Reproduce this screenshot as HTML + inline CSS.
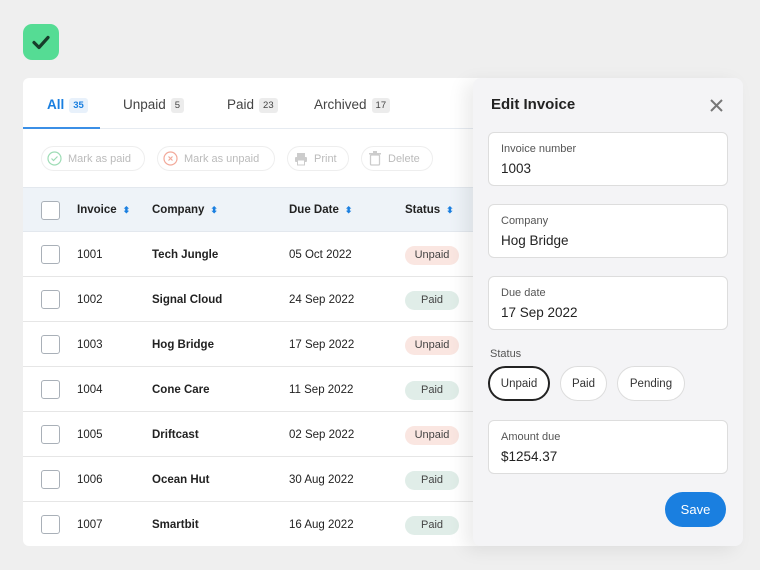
<!DOCTYPE html>
<html><head><style>
*{box-sizing:border-box;margin:0;padding:0}
body{width:760px;height:570px;background:#efefef;font-family:"Liberation Sans",sans-serif;position:relative;overflow:hidden;color:#222}
.abs{position:absolute}
.logo{left:23px;top:24px;width:36px;height:36px;border-radius:9px;background:#55dc94}
.card{left:23px;top:78px;width:470px;height:468px;background:#fff;border-radius:6px;overflow:hidden}
.tab{top:19px;font-size:13.5px;color:#444}
.cnt{display:inline-block;background:#ececec;color:#444;font-size:9.5px;padding:2px 4px;border-radius:3px;margin-left:5px;vertical-align:1px}
.btn{top:68px;height:25px;border:1px solid #eee;border-radius:13px;font-size:11px;color:#bbb;padding:6px 10px 0 26px}
.hdr{left:0;top:109px;width:470px;height:45px;background:#eef3f8;border-top:1px solid #e3e8ee;border-bottom:1px solid #e3e8ee}
.cb{width:19px;height:19px;border:1.5px solid #a9b0b8;border-radius:3px;background:#fff}
.th{font-size:11.5px;font-weight:bold;color:#222}
.ar{color:#1a7fe0;font-size:9px;margin-left:6px}
.row{left:0;width:470px;height:45px;border-bottom:1px solid #e6e6e6}
.td{font-size:11.5px;top:17px}
.badge{left:382px;top:14px;width:54px;height:19px;border-radius:10px;font-size:11px;text-align:center;line-height:19px;color:#444}
.u{background:#fae6e1}.p{background:#e0ede8}
.panel{left:473px;top:78px;width:270px;height:468px;background:#f4f4f6;border-radius:8px;box-shadow:-8px 4px 18px rgba(0,0,0,.08)}
.f{left:15px;width:240px;height:54px;background:#fff;border:1px solid #ddd;border-radius:6px}
.f .l{position:absolute;left:12px;top:10px;font-size:11px;color:#555}
.f .v{position:absolute;left:12px;top:28px;font-size:13.5px;color:#222}
.pill{top:288px;height:35px;border:1px solid #ddd;border-radius:18px;background:#fff;font-size:11.5px;text-align:center;line-height:35px;color:#333}
</style></head><body>
<div class="abs logo"><svg width="36" height="36" viewBox="0 0 36 36"><path d="M11 18.5l5 5 9-10" fill="none" stroke="#173d2a" stroke-width="3.2" stroke-linecap="round" stroke-linejoin="round"/></svg></div>
<div class="abs card">
 <div class="abs tab" style="left:24px;color:#1a7fe0;font-weight:bold">All<span class="cnt" style="background:#e8f1fb;color:#1a7fe0">35</span></div>
 <div class="abs tab" style="left:100px">Unpaid<span class="cnt">5</span></div>
 <div class="abs tab" style="left:204px">Paid<span class="cnt">23</span></div>
 <div class="abs tab" style="left:291px">Archived<span class="cnt">17</span></div>
 <div class="abs" style="left:0;top:50px;width:470px;height:1px;background:#e6ebf1"></div>
 <div class="abs" style="left:0;top:49px;width:77px;height:2px;background:#3b8fe6"></div>
 <div class="abs btn" style="left:18px;width:104px">Mark as paid<svg class="abs" style="left:5px;top:4px" width="15" height="15"><circle cx="7.5" cy="7.5" r="6.5" fill="none" stroke="#9ddcb5" stroke-width="1.2"/><path d="M4.5 7.5l2 2 4-4" fill="none" stroke="#9ddcb5" stroke-width="1.2"/></svg></div>
 <div class="abs btn" style="left:134px;width:118px">Mark as unpaid<svg class="abs" style="left:5px;top:4px" width="15" height="15"><circle cx="7.5" cy="7.5" r="6.5" fill="none" stroke="#f2a99a" stroke-width="1.2"/><path d="M5.5 5.5l4 4M9.5 5.5l-4 4" stroke="#f2a99a" stroke-width="1.2"/></svg></div>
 <div class="abs btn" style="left:264px;width:62px">Print<svg class="abs" style="left:6px;top:5px" width="14" height="14"><rect x="3" y="1" width="8" height="4" fill="#ccc"/><rect x="1" y="5" width="12" height="5" rx="1" fill="#ccc"/><rect x="3.5" y="8" width="7" height="5" fill="#fff" stroke="#ccc"/></svg></div>
 <div class="abs btn" style="left:338px;width:72px">Delete<svg class="abs" style="left:6px;top:4px" width="14" height="15"><rect x="1" y="2" width="12" height="1.5" fill="#ccc"/><rect x="5" y="0" width="4" height="2" fill="#ccc"/><rect x="2.5" y="4" width="9" height="10" rx="1" fill="none" stroke="#ccc" stroke-width="1.3"/></svg></div>
 <div class="abs hdr">
  <div class="abs cb" style="left:18px;top:13px"></div>
  <div class="abs th" style="left:54px;top:16px">Invoice<span class="ar">⬍</span></div>
  <div class="abs th" style="left:129px;top:16px">Company<span class="ar">⬍</span></div>
  <div class="abs th" style="left:266px;top:16px">Due Date<span class="ar">⬍</span></div>
  <div class="abs th" style="left:382px;top:16px">Status<span class="ar">⬍</span></div>
 </div>
 <div class="abs row" style="top:154px"><div class="abs cb" style="left:18px;top:13px"></div><div class="abs td" style="left:54px">1001</div><div class="abs td" style="left:129px;font-weight:bold">Tech Jungle</div><div class="abs td" style="left:266px">05 Oct 2022</div><div class="abs badge u">Unpaid</div></div>
 <div class="abs row" style="top:199px"><div class="abs cb" style="left:18px;top:13px"></div><div class="abs td" style="left:54px">1002</div><div class="abs td" style="left:129px;font-weight:bold">Signal Cloud</div><div class="abs td" style="left:266px">24 Sep 2022</div><div class="abs badge p">Paid</div></div>
 <div class="abs row" style="top:244px"><div class="abs cb" style="left:18px;top:13px"></div><div class="abs td" style="left:54px">1003</div><div class="abs td" style="left:129px;font-weight:bold">Hog Bridge</div><div class="abs td" style="left:266px">17 Sep 2022</div><div class="abs badge u">Unpaid</div></div>
 <div class="abs row" style="top:289px"><div class="abs cb" style="left:18px;top:13px"></div><div class="abs td" style="left:54px">1004</div><div class="abs td" style="left:129px;font-weight:bold">Cone Care</div><div class="abs td" style="left:266px">11 Sep 2022</div><div class="abs badge p">Paid</div></div>
 <div class="abs row" style="top:334px"><div class="abs cb" style="left:18px;top:13px"></div><div class="abs td" style="left:54px">1005</div><div class="abs td" style="left:129px;font-weight:bold">Driftcast</div><div class="abs td" style="left:266px">02 Sep 2022</div><div class="abs badge u">Unpaid</div></div>
 <div class="abs row" style="top:379px"><div class="abs cb" style="left:18px;top:13px"></div><div class="abs td" style="left:54px">1006</div><div class="abs td" style="left:129px;font-weight:bold">Ocean Hut</div><div class="abs td" style="left:266px">30 Aug 2022</div><div class="abs badge p">Paid</div></div>
 <div class="abs row" style="top:424px;border:none"><div class="abs cb" style="left:18px;top:13px"></div><div class="abs td" style="left:54px">1007</div><div class="abs td" style="left:129px;font-weight:bold">Smartbit</div><div class="abs td" style="left:266px">16 Aug 2022</div><div class="abs badge p">Paid</div></div>
</div>
<div class="abs panel">
 <div class="abs" style="left:18px;top:18px;font-size:15px;font-weight:bold;color:#222">Edit Invoice</div>
 <svg class="abs" style="left:237px;top:21px" width="13" height="13"><path d="M1 1l11 11M12 1L1 12" stroke="#777" stroke-width="2"/></svg>
 <div class="abs f" style="top:54px"><div class="l">Invoice number</div><div class="v">1003</div></div>
 <div class="abs f" style="top:126px"><div class="l">Company</div><div class="v">Hog Bridge</div></div>
 <div class="abs f" style="top:198px"><div class="l">Due date</div><div class="v">17 Sep 2022</div></div>
 <div class="abs" style="left:17px;top:270px;font-size:11px;color:#555">Status</div>
 <div class="abs pill" style="left:15px;width:62px;border:2px solid #222;line-height:33px">Unpaid</div>
 <div class="abs pill" style="left:87px;width:47px">Paid</div>
 <div class="abs pill" style="left:144px;width:68px">Pending</div>
 <div class="abs f" style="top:342px"><div class="l">Amount due</div><div class="v">$1254.37</div></div>
 <div class="abs" style="left:192px;top:414px;width:61px;height:35px;border-radius:18px;background:#1a7fe0;color:#fff;font-size:13px;text-align:center;line-height:35px">Save</div>
</div>
</body></html>
